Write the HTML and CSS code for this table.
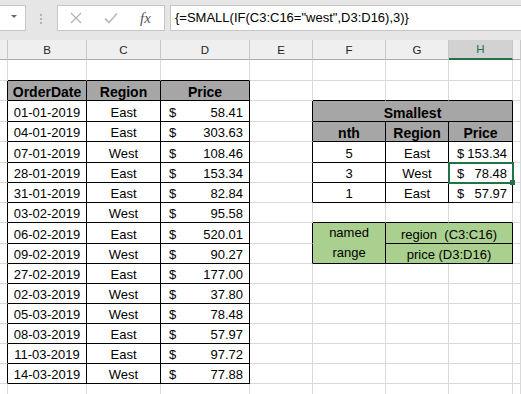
FILE: index.html
```html
<!DOCTYPE html>
<html lang="en">

<head>
    <meta charset="utf-8">
    <title>SMALL with IF</title>
    <link rel="stylesheet" href="styles.css">
</head>

<body>
    <div class="bar">
        <div class="namebox"><span class="caret"></span></div>
        <div class="grip"></div>
        <div class="btns">
            <span class="btn">
                <svg width="12" height="12" viewBox="0 0 12 12"><path d="M1 1 L11 11 M11 1 L1 11" stroke="#b4b4b4" stroke-width="1.3" fill="none"/></svg>
            </span>
            <span class="btn">
                <svg width="14" height="12" viewBox="0 0 14 12"><path d="M1 6.5 L5 10.5 L13 1.5" stroke="#bcbcbc" stroke-width="1.8" fill="none"/></svg>
            </span>
            <span class="btn fx">fx</span>
        </div>
        <div class="formula">{=SMALL(IF(C3:C16="west",D3:D16),3)}</div>
    </div>

    <table class="sheet">
        <colgroup>
            <col class="ca"><col class="cb"><col class="cc"><col class="cd"><col class="ce"><col class="cf"><col class="cg"><col class="ch"><col class="ci">
        </colgroup>
        <thead>
            <tr>
                <th></th><th>B</th><th>C</th><th>D</th><th>E</th><th>F</th><th>G</th><th class="sel">H</th><th></th>
            </tr>
        </thead>
        <tbody>
            <tr class="tall">
                <td></td><td class="u"></td><td class="u"></td><td class="u"></td><td></td><td></td><td></td><td></td><td></td>
            </tr>
            <tr>
                <td class="r"></td><td class="t g">OrderDate</td><td class="t g">Region</td><td class="t g">Price</td>
                <td></td><td class="u"></td><td class="u"></td><td class="u"></td><td></td>
            </tr>
            <tr class="tall">
                <td class="r"></td><td class="t">01-01-2019</td><td class="t">East</td><td class="t n"><span>$</span>58.41</td>
                <td class="r"></td><td class="t g" colspan="3">Smallest</td><td></td>
            </tr>
            <tr>
                <td class="r"></td><td class="t">04-01-2019</td><td class="t">East</td><td class="t n"><span>$</span>303.63</td>
                <td class="r"></td><td class="t g">nth</td><td class="t g">Region</td><td class="t g">Price</td><td></td>
            </tr>
            <tr class="tall">
                <td class="r"></td><td class="t">07-01-2019</td><td class="t">West</td><td class="t n"><span>$</span>108.46</td>
                <td class="r"></td><td class="t">5</td><td class="t">East</td><td class="t n tight"><span>$</span>153.34</td><td></td>
            </tr>
            <tr>
                <td class="r"></td><td class="t">28-01-2019</td><td class="t">East</td><td class="t n"><span>$</span>153.34</td>
                <td class="r"></td><td class="t">3</td><td class="t">West</td><td class="t n tight active"><span>$</span>78.48</td><td></td>
            </tr>
            <tr>
                <td class="r"></td><td class="t">31-01-2019</td><td class="t">East</td><td class="t n"><span>$</span>82.84</td>
                <td class="r"></td><td class="t">1</td><td class="t">East</td><td class="t n tight"><span>$</span>57.97</td><td></td>
            </tr>
            <tr>
                <td class="r"></td><td class="t">03-02-2019</td><td class="t">West</td><td class="t n"><span>$</span>95.58</td>
                <td></td><td class="u"></td><td class="u"></td><td class="u"></td><td></td>
            </tr>
            <tr>
                <td class="r"></td><td class="t">06-02-2019</td><td class="t">East</td><td class="t n"><span>$</span>520.01</td>
                <td class="r"></td><td class="t gr named" rowspan="2">named<br>range</td><td class="t gr" colspan="2">region&nbsp; (C3:C16)</td><td></td>
            </tr>
            <tr>
                <td class="r"></td><td class="t">09-02-2019</td><td class="t">West</td><td class="t n"><span>$</span>90.27</td>
                <td class="r"></td><td class="t gr" colspan="2">price (D3:D16)</td><td></td>
            </tr>
            <tr>
                <td class="r"></td><td class="t">27-02-2019</td><td class="t">East</td><td class="t n"><span>$</span>177.00</td>
                <td></td><td></td><td></td><td></td><td></td>
            </tr>
            <tr>
                <td class="r"></td><td class="t">02-03-2019</td><td class="t">West</td><td class="t n"><span>$</span>37.80</td>
                <td></td><td></td><td></td><td></td><td></td>
            </tr>
            <tr>
                <td class="r"></td><td class="t">05-03-2019</td><td class="t">West</td><td class="t n"><span>$</span>78.48</td>
                <td></td><td></td><td></td><td></td><td></td>
            </tr>
            <tr>
                <td class="r"></td><td class="t">08-03-2019</td><td class="t">East</td><td class="t n"><span>$</span>57.97</td>
                <td></td><td></td><td></td><td></td><td></td>
            </tr>
            <tr>
                <td class="r"></td><td class="t">11-03-2019</td><td class="t">East</td><td class="t n"><span>$</span>97.72</td>
                <td></td><td></td><td></td><td></td><td></td>
            </tr>
            <tr>
                <td class="r"></td><td class="t">14-03-2019</td><td class="t">West</td><td class="t n"><span>$</span>77.88</td>
                <td></td><td></td><td></td><td></td><td></td>
            </tr>
            <tr>
                <td></td><td></td><td></td><td></td><td></td><td></td><td></td><td></td><td></td>
            </tr>
        </tbody>
    </table>
</body>

</html>
```

FILE: styles.css
```css
body {
    margin: 0;
    background: #fff;
    font-family: 'Liberation Sans', Arial, sans-serif;
    color: #000;
    overflow: hidden;
}

/* formula bar */

.bar {
    display: flex;
    align-items: flex-start;
    height: 40px;
    padding-top: 5px;
    box-sizing: border-box;
    background: #e6e6e6;
}

.namebox {
    display: flex;
    justify-content: flex-end;
    width: 26px;
    height: 26px;
    padding-right: 8px;
    box-sizing: border-box;
    background: #fff;
    border: 1px solid #c6c6c6;
    border-left: none;
}

.caret {
    margin-top: 9px;
    width: 0;
    height: 0;
    border-left: 3px solid transparent;
    border-right: 3px solid transparent;
    border-top: 3px solid #666;
}

.grip {
    width: 2px;
    height: 2px;
    margin: 9px 0 0 14px;
    background: #b3b3b3;
    box-shadow: 0 4px #b3b3b3, 0 8px #b3b3b3;
}

.btns {
    display: flex;
    width: 108px;
    height: 26px;
    margin-left: 15px;
    box-sizing: border-box;
    background: #fff;
    border: 1px solid #c6c6c6;
}

.btn {
    display: flex;
    align-items: center;
    justify-content: center;
    width: 35px;
    height: 24px;
}

.fx {
    font-family: 'Liberation Serif', serif;
    font-style: italic;
    font-size: 15px;
    color: #555;
}

.formula {
    flex: 1;
    height: 26px;
    margin-left: 5px;
    padding-left: 4px;
    box-sizing: border-box;
    background: #fff;
    border: 1px solid #c6c6c6;
    border-right: none;
    font-size: 13px;
    line-height: 24px;
    white-space: nowrap;
}

/* grid */

.sheet {
    border-spacing: 0;
    table-layout: fixed;
    width: 521px;
}

.ca { width: 8px; }
.cb { width: 79px; }
.cc { width: 74px; }
.cd { width: 89px; }
.ce { width: 63px; }
.cf { width: 73px; }
.cg { width: 63px; }
.ch { width: 64px; }
.ci { width: 8px; }

.sheet th {
    height: 20px;
    padding: 0;
    box-sizing: border-box;
    background: #efefef;
    border-right: 1px solid #c8c8c8;
    border-bottom: 1px solid #ababab;
    font-weight: normal;
    font-size: 11.5px;
    color: #262626;
    text-align: center;
}

.sheet th.sel {
    background: #d2d2d2;
    color: #217346;
    border-bottom: 2px solid #217346;
}

.sheet tr {
    height: 20px;
}

.sheet tr.tall {
    height: 21px;
}

.sheet td {
    padding: 0 3px;
    border-right: 1px solid #d9d9d9;
    border-bottom: 1px solid #d9d9d9;
    font-size: 13px;
    line-height: 16px;
    vertical-align: bottom;
    white-space: nowrap;
}

.sheet td.r {
    border-right-color: #000;
}

.sheet td.u {
    border-bottom-color: #000;
}

.sheet td.t {
    border-right-color: #000;
    border-bottom-color: #000;
    text-align: center;
}

.sheet td.g {
    background: #a6a6a6;
    font-weight: bold;
    font-size: 14px;
}

.sheet td.gr {
    background: #a9d08e;
}

.sheet td.named {
    line-height: 20px;
    vertical-align: middle;
}

.sheet td.n {
    padding: 0 6px 0 8px;
    text-align: right;
}

.sheet td.tight {
    padding: 0 5px 0 8px;
}

.n span {
    float: left;
}

.active {
    position: relative;
}

.active::after {
    content: "";
    position: absolute;
    left: -1px;
    top: -1px;
    right: -2px;
    bottom: -2px;
    border: 2px solid #217346;
}

.active::before {
    content: "";
    position: absolute;
    right: -3px;
    bottom: -3px;
    width: 5px;
    height: 5px;
    background: #217346;
    z-index: 1;
}
```
